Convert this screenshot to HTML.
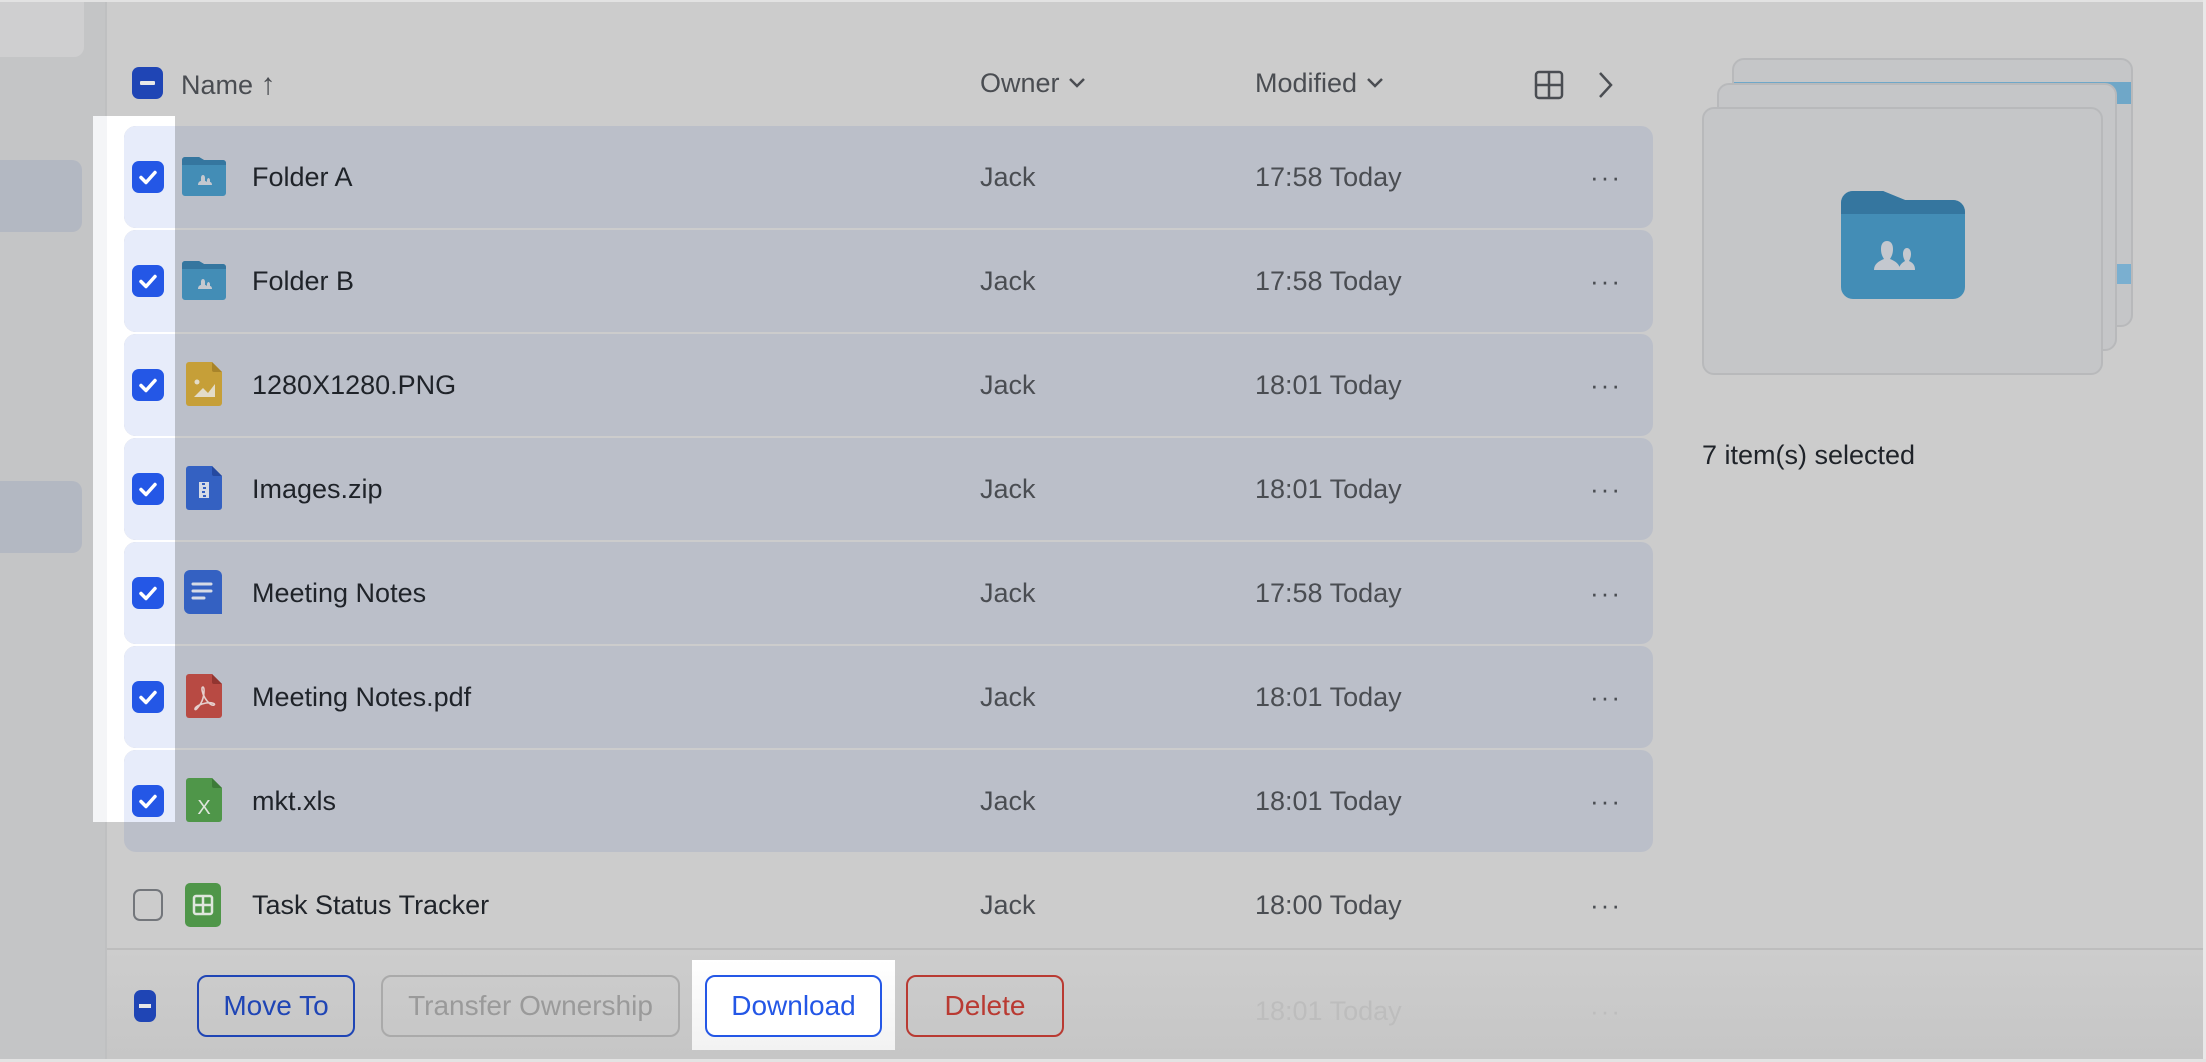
<!DOCTYPE html>
<html><head><meta charset="utf-8"><style>
*{margin:0;padding:0;box-sizing:border-box}
body{width:2206px;height:1062px;overflow:hidden;background:#cccccc;font-family:"Liberation Sans",Arial,sans-serif;position:relative}
.a{position:absolute}
.row{position:absolute;left:124px;width:1529px;height:102px;background:#bbbfc9;border-radius:12px}
.cb{position:absolute;left:132px;width:32px;height:32px;border-radius:7px;background:#2457e6}
.cb svg{position:absolute;left:0;top:0}
.name{position:absolute;left:252px;font-size:27px;color:#1f2329;line-height:30px}
.own{position:absolute;left:980px;font-size:27px;color:#4a4d52;line-height:30px}
.mod{position:absolute;left:1255px;font-size:27px;color:#4a4d52;line-height:30px}
.dots{position:absolute;left:1590px;font-size:26px;color:#4a4d52;line-height:30px;letter-spacing:2px;margin-top:6px}
.ic{position:absolute;left:182px}
.btn{position:absolute;top:975px;height:62px;border-radius:10px;font-size:28px;text-align:center;line-height:58px;border:2px solid}
</style></head><body>
<div class="a" style="left:0;top:0;width:107px;height:1062px;background:#c4c5c6;border-right:2px solid #bfc0c1"></div>
<div class="a" style="left:0;top:0;width:84px;height:57px;background:#cfcfd0;border-radius:0 0 10px 0"></div>
<div class="a" style="left:0;top:160px;width:82px;height:72px;background:#b3b8c2;border-radius:0 10px 10px 0"></div>
<div class="a" style="left:0;top:481px;width:82px;height:72px;background:#b3b8c2;border-radius:0 10px 10px 0"></div>
<div class="a" style="left:0;top:0;width:2206px;height:2px;background:#e2e2e2"></div>
<div class="a" style="left:2203px;top:0;width:3px;height:1062px;background:#e8e8e8"></div>
<div class="a" style="left:0;top:1059px;width:2206px;height:3px;background:#e3e3e3"></div>

<div class="a" style="left:132px;top:67px;width:31px;height:32px;border-radius:7px;background:#1f45b5"><div class="a" style="left:8px;top:14px;width:15px;height:4px;background:#e8e8e8;border-radius:1px"></div></div>
<div class="a" style="left:181px;top:68px;font-size:27px;color:#4a4d52">Name <span style="font-size:30px">↑</span></div>
<div class="a" style="left:980px;top:68px;font-size:27px;color:#4a4d52">Owner <svg width="20" height="14" style="vertical-align:2px"><path d="M3 3l7 7 7-7" stroke="#4a4d52" stroke-width="2.5" fill="none"/></svg></div>
<div class="a" style="left:1255px;top:68px;font-size:27px;color:#4a4d52">Modified <svg width="20" height="14" style="vertical-align:2px"><path d="M3 3l7 7 7-7" stroke="#4a4d52" stroke-width="2.5" fill="none"/></svg></div>
<svg class="a" style="left:1534px;top:70px" width="30" height="30"><rect x="2" y="2" width="26" height="26" rx="3" fill="none" stroke="#4a4d52" stroke-width="2.5"/><path d="M15 2v26M2 15h26" stroke="#4a4d52" stroke-width="2.5"/></svg>
<svg class="a" style="left:1595px;top:70px" width="20" height="30"><path d="M5 3l11 12-11 12" stroke="#4a4d52" stroke-width="2.5" fill="none"/></svg>

<div class="a" style="left:93px;top:116px;width:82px;height:706px;background:#f4f5f7"></div>
<div class="a" style="left:107px;top:116px;width:68px;height:706px;background:#fff"></div>

<div class="row" style="top:126px"></div>
<div class="row" style="top:230px"></div>
<div class="row" style="top:334px"></div>
<div class="row" style="top:438px"></div>
<div class="row" style="top:542px"></div>
<div class="row" style="top:646px"></div>
<div class="row" style="top:750px"></div>
<div class="a" style="left:124px;top:126px;width:51px;height:102px;background:#e7ecfa;border-radius:12px 0 0 12px"></div>
<div class="a" style="left:124px;top:230px;width:51px;height:102px;background:#e7ecfa;border-radius:12px 0 0 12px"></div>
<div class="a" style="left:124px;top:334px;width:51px;height:102px;background:#e7ecfa;border-radius:12px 0 0 12px"></div>
<div class="a" style="left:124px;top:438px;width:51px;height:102px;background:#e7ecfa;border-radius:12px 0 0 12px"></div>
<div class="a" style="left:124px;top:542px;width:51px;height:102px;background:#e7ecfa;border-radius:12px 0 0 12px"></div>
<div class="a" style="left:124px;top:646px;width:51px;height:102px;background:#e7ecfa;border-radius:12px 0 0 12px"></div>
<div class="a" style="left:124px;top:750px;width:51px;height:72px;background:#e7ecfa;border-radius:12px 0 0 0"></div>

<div class="cb" style="top:161px"><svg width="32" height="32"><path d="M9 16.5l5 5 9-10" stroke="#fff" stroke-width="3.5" fill="none" stroke-linecap="round" stroke-linejoin="round"/></svg></div>
<div class="cb" style="top:265px"><svg width="32" height="32"><path d="M9 16.5l5 5 9-10" stroke="#fff" stroke-width="3.5" fill="none" stroke-linecap="round" stroke-linejoin="round"/></svg></div>
<div class="cb" style="top:369px"><svg width="32" height="32"><path d="M9 16.5l5 5 9-10" stroke="#fff" stroke-width="3.5" fill="none" stroke-linecap="round" stroke-linejoin="round"/></svg></div>
<div class="cb" style="top:473px"><svg width="32" height="32"><path d="M9 16.5l5 5 9-10" stroke="#fff" stroke-width="3.5" fill="none" stroke-linecap="round" stroke-linejoin="round"/></svg></div>
<div class="cb" style="top:577px"><svg width="32" height="32"><path d="M9 16.5l5 5 9-10" stroke="#fff" stroke-width="3.5" fill="none" stroke-linecap="round" stroke-linejoin="round"/></svg></div>
<div class="cb" style="top:681px"><svg width="32" height="32"><path d="M9 16.5l5 5 9-10" stroke="#fff" stroke-width="3.5" fill="none" stroke-linecap="round" stroke-linejoin="round"/></svg></div>
<div class="cb" style="top:785px"><svg width="32" height="32"><path d="M9 16.5l5 5 9-10" stroke="#fff" stroke-width="3.5" fill="none" stroke-linecap="round" stroke-linejoin="round"/></svg></div>
<div class="a" style="left:133px;top:889px;width:30px;height:32px;border-radius:7px;border:2.5px solid #73767b"></div>

<svg class="ic" style="top:156px" width="44" height="40"><path d="M0 4a3 3 0 0 1 3-3h14l5 3h19a3 3 0 0 1 3 3v30a3 3 0 0 1-3 3H3a3 3 0 0 1-3-3z" fill="#438db6"/><path d="M0 4a3 3 0 0 1 3-3h14l5 3h19a3 3 0 0 1 3 3v2H0z" fill="#35769f"/><path d="M16 29c0-3 2-4 3-4v-3c0-2 1-3 2-3s2 1 2 3v3c1 0 3 1 3 4zM23 29c0-2 1-3 2-3v-2c0-1 1-2 1.5-2s1.5 1 1.5 2v2c1 0 2 1 2 3z" fill="#c4c8cf"/></svg>
<svg class="ic" style="top:260px" width="44" height="40"><path d="M0 4a3 3 0 0 1 3-3h14l5 3h19a3 3 0 0 1 3 3v30a3 3 0 0 1-3 3H3a3 3 0 0 1-3-3z" fill="#438db6"/><path d="M0 4a3 3 0 0 1 3-3h14l5 3h19a3 3 0 0 1 3 3v2H0z" fill="#35769f"/><path d="M16 29c0-3 2-4 3-4v-3c0-2 1-3 2-3s2 1 2 3v3c1 0 3 1 3 4zM23 29c0-2 1-3 2-3v-2c0-1 1-2 1.5-2s1.5 1 1.5 2v2c1 0 2 1 2 3z" fill="#c4c8cf"/></svg>
<svg class="ic" style="left:186px;top:362px" width="36" height="44"><path d="M3 0h23l10 10v31a3 3 0 0 1-3 3H3a3 3 0 0 1-3-3V3a3 3 0 0 1 3-3z" fill="#c69f38"/><path d="M26 0l10 10H28a2 2 0 0 1-2-2z" fill="#a8842a"/><circle cx="11" cy="20" r="2.5" fill="#e3dcc8"/><path d="M8 35l9-9 5 5 7-9v13z" fill="#e3dcc8"/></svg>
<svg class="ic" style="left:186px;top:466px" width="36" height="44"><path d="M3 0h23l10 10v31a3 3 0 0 1-3 3H3a3 3 0 0 1-3-3V3a3 3 0 0 1 3-3z" fill="#3461c2"/><path d="M26 0l10 10H28a2 2 0 0 1-2-2z" fill="#2549a0"/><rect x="13" y="16" width="10" height="16" fill="#d6dbe6"/><path d="M16 18h3M17 22h3M16 26h3M17 30h3" stroke="#3461c2" stroke-width="2"/></svg>
<svg class="ic" style="left:184px;top:570px" width="40" height="44"><path d="M6 0h26a6 6 0 0 1 6 6v38H6a6 6 0 0 1-6-6V6a6 6 0 0 1 6-6z" fill="#3461c2"/><path d="M9 14h18M9 21h18M9 28h11" stroke="#d6dbe6" stroke-width="3" stroke-linecap="round"/></svg>
<svg class="ic" style="left:186px;top:674px" width="36" height="44"><path d="M3 0h23l10 10v31a3 3 0 0 1-3 3H3a3 3 0 0 1-3-3V3a3 3 0 0 1 3-3z" fill="#b84a43"/><path d="M26 0l10 10H28a2 2 0 0 1-2-2z" fill="#923530"/><path d="M17 13c-2 0-1 6 2 11s7 8 9 7-2-3-8-2-11 4-11 6 3-1 6-6 4-15 2-16z" fill="none" stroke="#e5cfcd" stroke-width="1.6"/></svg>
<svg class="ic" style="left:186px;top:778px" width="36" height="44"><path d="M3 0h23l10 10v31a3 3 0 0 1-3 3H3a3 3 0 0 1-3-3V3a3 3 0 0 1 3-3z" fill="#4f9649"/><path d="M26 0l10 10H28a2 2 0 0 1-2-2z" fill="#3d7b38"/><text x="18" y="36" font-family="Liberation Sans" font-size="20" fill="#dfe6dd" text-anchor="middle">X</text></svg>
<svg class="ic" style="left:185px;top:883px" width="36" height="44"><rect width="36" height="44" rx="5" fill="#4f9649"/><rect x="9" y="13" width="18" height="18" rx="2" fill="none" stroke="#dfe6dd" stroke-width="2.5"/><path d="M18 13v18M9 22h18" stroke="#dfe6dd" stroke-width="2.5"/></svg>

<div class="name" style="top:162px">Folder A</div><div class="own" style="top:162px">Jack</div><div class="mod" style="top:162px">17:58 Today</div><div class="dots" style="top:156px">···</div>
<div class="name" style="top:266px">Folder B</div><div class="own" style="top:266px">Jack</div><div class="mod" style="top:266px">17:58 Today</div><div class="dots" style="top:260px">···</div>
<div class="name" style="top:370px">1280X1280.PNG</div><div class="own" style="top:370px">Jack</div><div class="mod" style="top:370px">18:01 Today</div><div class="dots" style="top:364px">···</div>
<div class="name" style="top:474px">Images.zip</div><div class="own" style="top:474px">Jack</div><div class="mod" style="top:474px">18:01 Today</div><div class="dots" style="top:468px">···</div>
<div class="name" style="top:578px">Meeting Notes</div><div class="own" style="top:578px">Jack</div><div class="mod" style="top:578px">17:58 Today</div><div class="dots" style="top:572px">···</div>
<div class="name" style="top:682px">Meeting Notes.pdf</div><div class="own" style="top:682px">Jack</div><div class="mod" style="top:682px">18:01 Today</div><div class="dots" style="top:676px">···</div>
<div class="name" style="top:786px">mkt.xls</div><div class="own" style="top:786px">Jack</div><div class="mod" style="top:786px">18:01 Today</div><div class="dots" style="top:780px">···</div>
<div class="name" style="top:890px">Task Status Tracker</div><div class="own" style="top:890px">Jack</div><div class="mod" style="top:890px">18:00 Today</div><div class="dots" style="top:884px">···</div>

<div class="a" style="left:107px;top:948px;width:2096px;height:2px;background:#bdbdbd"></div>
<div class="a" style="left:107px;top:950px;width:2096px;height:109px;background:linear-gradient(#cdcdcd,#c6c6c6)"></div>
<div class="mod" style="top:996px;color:#bdbdbd">18:01 Today</div>
<div class="dots" style="top:990px;color:#bdbdbd">···</div>
<div class="a" style="left:134px;top:990px;width:22px;height:32px;border-radius:7px;background:#1f45b5"><div class="a" style="left:5px;top:14px;width:12px;height:4px;background:#e8e8e8"></div></div>
<div class="btn" style="left:197px;width:158px;border-color:#1f45b5;color:#1f45b5">Move To</div>
<div class="btn" style="left:381px;width:299px;border-color:#aaaaaa;color:#9a9a9a">Transfer Ownership</div>
<div class="a" style="left:692px;top:960px;width:203px;height:90px;background:linear-gradient(#fff,#f2f2f2)"></div>
<div class="btn" style="left:705px;width:177px;border-color:#2457e6;color:#2457e6;background:#fff">Download</div>
<div class="btn" style="left:906px;width:158px;border-color:#b93a32;color:#b93a32">Delete</div>

<div class="a" style="left:1732px;top:58px;width:401px;height:269px;border:2px solid #b8b9bb;border-radius:12px;background:#c5c6c8;overflow:hidden"><div class="a" style="left:0;top:22px;width:400px;height:22px;background:#6fa7c8"></div><div class="a" style="left:360px;top:204px;width:40px;height:20px;background:#7aafd0"></div></div>
<div class="a" style="left:1717px;top:83px;width:400px;height:268px;border:2px solid #b8b9bb;border-radius:12px;background:#c5c6c8"></div>
<div class="a" style="left:1702px;top:107px;width:401px;height:268px;border:2px solid #b8b9bb;border-radius:12px;background:#c5c6c8"></div>
<svg class="a" style="left:1841px;top:191px" width="124" height="108"><path d="M0 12a12 12 0 0 1 12-12h30l22 9h48a12 12 0 0 1 12 12v75a12 12 0 0 1-12 12H12a12 12 0 0 1-12-12z" fill="#438db6"/><path d="M0 12a12 12 0 0 1 12-12h30l22 9h48a12 12 0 0 1 12 12v2H0z" fill="#35769f"/><path d="M33 79c0-6 5-9 10-11-2-3-3-6-3-10 0-6 3-8 6-8s6 2 6 8c0 4-1 7-3 10 5 2 10 5 10 11zM58 79c0-5 3-7 6-9-1-2-2-4-2-7 0-4 2-6 4-6s4 2 4 6c0 3-1 5-2 7 4 2 6 4 6 9z" fill="#c4c8cf"/></svg>
<div class="a" style="left:1702px;top:440px;font-size:27px;color:#1f2329">7 item(s) selected</div>
</body></html>
